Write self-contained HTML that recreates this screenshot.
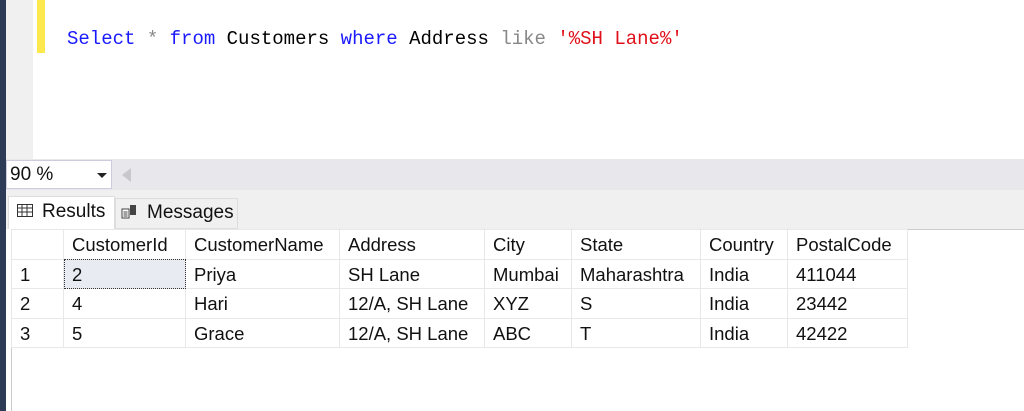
<!DOCTYPE html>
<html><head><style>
*{margin:0;padding:0;box-sizing:border-box}
body{width:1024px;height:411px;overflow:hidden;background:#fff;position:relative;font-family:"Liberation Sans",Arial,sans-serif}
.a{position:absolute}
.code{font-family:"Liberation Mono",monospace;font-size:19px;white-space:pre;color:#000}
.k{color:#1a1aff}.g{color:#888}.s{color:#e0101a}
table{border-collapse:collapse;font-size:18.5px;color:#111;table-layout:fixed}
td{border:1px solid #e8e8e8;height:29.5px;padding:2px 0 0 8px;white-space:nowrap;overflow:hidden}
</style></head><body>
<div class="a" style="left:0;top:0;width:6px;height:411px;background:#2d3b57"></div>
<div class="a" style="left:6px;top:0;width:27px;height:159px;background:#f0f0f0"></div>
<div class="a" style="left:37px;top:0;width:8px;height:53px;background:#fde84d"></div>
<div class="a code" style="left:67px;top:28px"><span class="k">Select</span> <span class="g">*</span> <span class="k">from</span> Customers <span class="k">where</span> Address <span class="g">like</span> <span class="s">'%SH Lane%'</span></div>
<div class="a" style="left:6px;top:159px;width:1018px;height:31px;background:#e8e8ec"></div>
<div class="a" style="left:6px;top:160px;width:106px;height:29px;background:#fff;border:1px solid #ccd;font-size:19px;padding:3px 0 0 3px;color:#111">90 %</div>
<div class="a" style="left:97px;top:173px;width:0;height:0;border-left:5px solid transparent;border-right:5px solid transparent;border-top:5px solid #222"></div>
<div class="a" style="left:122px;top:168px;width:0;height:0;border-top:7px solid transparent;border-bottom:7px solid transparent;border-right:9px solid #c8c8cc"></div>
<div class="a" style="left:6px;top:190px;width:1018px;height:39px;background:#f0f0f0"></div>
<div class="a" style="left:8px;top:196px;width:107px;height:33px;background:#fff;border:1px solid #ddd;border-bottom:none;font-size:19px;padding:4px 0 0 33px;color:#111">Results</div>
<svg class="a" style="left:17px;top:204px" width="16" height="13" viewBox="0 0 16 13"><rect x="0.5" y="0.5" width="15" height="12" fill="none" stroke="#333"/><path d="M0 4H16M0 8H16M5 0V13M10 0V13" stroke="#333"/></svg>
<div class="a" style="left:115px;top:198px;width:123px;height:31px;background:#f0f0f0;border:1px solid #ddd;font-size:19px;padding:3px 0 0 31px;color:#111">Messages</div>
<svg class="a" style="left:121px;top:204px" width="18" height="18" viewBox="0 0 18 18"><rect x="1" y="5" width="7" height="9" fill="#fff" stroke="#444"/><path d="M2.5 8H6.5M2.5 10H6.5M2.5 12H6.5" stroke="#444"/><rect x="9" y="1" width="6" height="10" fill="#444"/></svg>
<div class="a" style="left:11px;top:229px;width:1013px;height:182px;background:#fff;border-left:1px solid #ccc;border-top:1px solid #ccc"></div>
<table class="a" style="left:11px;top:229px;width:896px">
<colgroup><col style="width:52px"><col style="width:122px"><col style="width:154px"><col style="width:145px"><col style="width:87px"><col style="width:129px"><col style="width:87px"><col style="width:120px"></colgroup>
<tr><td></td><td>CustomerId</td><td>CustomerName</td><td>Address</td><td>City</td><td>State</td><td>Country</td><td>PostalCode</td></tr>
<tr><td>1</td><td style="background:#e8ecf2;outline:1px dotted #333;outline-offset:-1px">2</td><td>Priya</td><td>SH Lane</td><td>Mumbai</td><td>Maharashtra</td><td>India</td><td>411044</td></tr>
<tr><td>2</td><td>4</td><td>Hari</td><td>12/A, SH Lane</td><td>XYZ</td><td>S</td><td>India</td><td>23442</td></tr>
<tr><td>3</td><td>5</td><td>Grace</td><td>12/A, SH Lane</td><td>ABC</td><td>T</td><td>India</td><td>42422</td></tr>
</table>
</body></html>
